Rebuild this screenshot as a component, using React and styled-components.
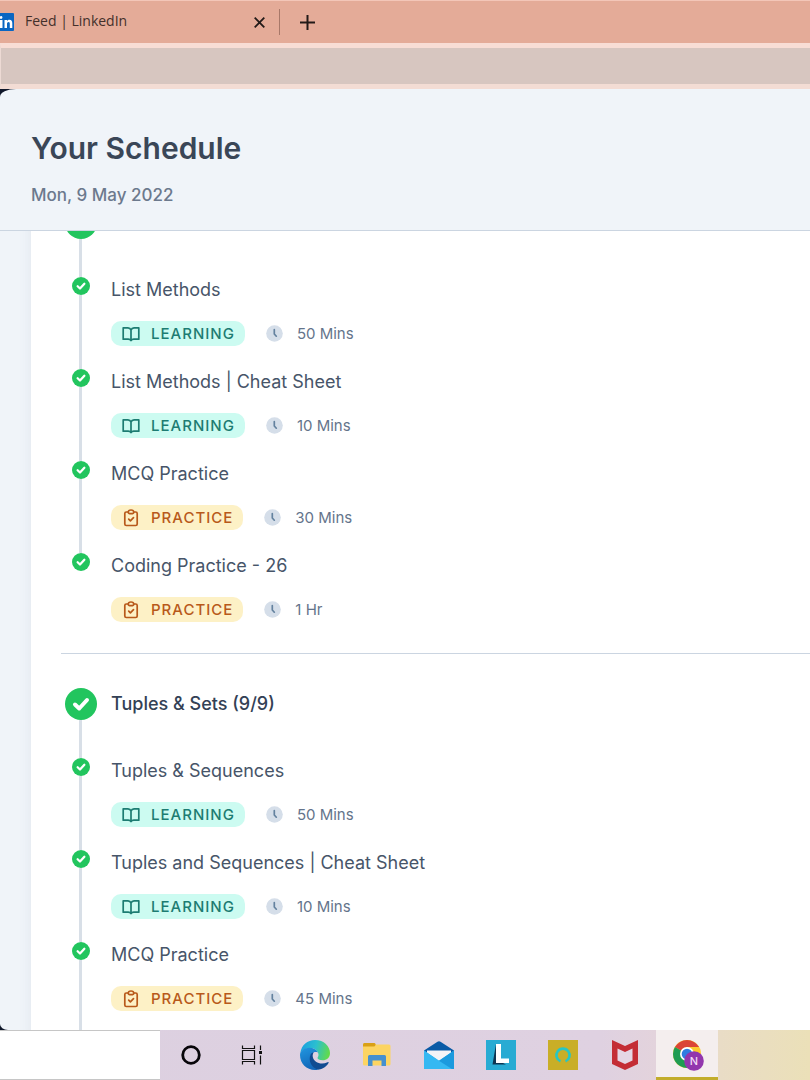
import React from "react";
import styled, { createGlobalStyle, css } from "styled-components";

const GlobalStyle = createGlobalStyle`
  * {
    box-sizing: border-box;
  }
  body {
    margin: 0;
    font-family: "Inter", "Liberation Sans", sans-serif;
  }
  h1,
  h2,
  h3,
  p,
  ul {
    margin: 0;
    padding: 0;
  }
  button {
    border: 0;
    padding: 0;
    background: none;
    font: inherit;
    color: inherit;
    cursor: pointer;
  }
`;

const Page = styled.div`
  display: flex;
  flex-direction: column;
  height: 100vh;
  overflow: hidden;
  background: #0f172a;
`;

const TabStrip = styled.div`
  display: flex;
  align-items: center;
  flex: none;
  height: 43px;
  border-top: 1px solid #f3c6b8;
  background: #e4ab98;
  color: #2b211f;
`;

const Tab = styled.div`
  display: flex;
  align-items: center;
  width: 280px;
  height: 26px;
  padding-right: 12px;
  border-right: 1px solid #a87869;
  .favicon {
    width: 14px;
    height: 18px;
    margin-right: 11px;
  }
  .title {
    flex: 1;
    padding-bottom: 2px;
    font-family: "Open Sans", "Noto Sans", sans-serif;
    font-size: 14px;
    line-height: 20px;
    color: #43302b;
  }
`;

const IconButton = styled.button`
  display: flex;
  align-items: center;
  justify-content: center;
  width: ${(props) => props.$size}px;
  height: ${(props) => props.$size}px;
`;

const NewTab = styled(IconButton)`
  margin-left: 17px;
`;

const Toolbar = styled.div`
  flex: none;
  height: 46px;
  border: solid #f8ddd5;
  border-width: 5px 0;
  border-bottom-color: #f3dcd4;
  background: #d7c6c0;
  border-left: 1px solid #eddad4;
`;

const Content = styled.main`
  display: flex;
  flex-direction: column;
  flex: 1;
  min-height: 0;
  overflow: hidden;
  border-radius: 16px 0 0 8px / 8px 0 0 6px;
  background: #f0f4f9;
`;

const Header = styled.header`
  flex: none;
  padding: 39px 31px 21px;
  border-bottom: 1px solid #cbd5e1;
  h1 {
    font-size: 30px;
    font-weight: 600;
    line-height: 40px;
    color: #3a4657;
  }
  p {
    margin-top: 13px;
    font-size: 17px;
    font-weight: 500;
    line-height: 28px;
    color: #6c798d;
  }
`;

const ScrollArea = styled.div`
  flex: 1;
  min-height: 0;
  overflow: hidden;
  padding-left: 31px;
`;

/* the list is scrolled past the first topic's heading */
const Card = styled.div`
  margin-top: -58px;
  padding-left: 30px;
  background: #fff;
  box-shadow: 0 0 12px rgba(100, 116, 139, 0.1);
`;

const Topic = styled.section`
  padding: 34px 0 8px 4px;
  & + & {
    border-top: 1px solid #cbd5e1;
  }
`;

const Row = styled.div`
  display: flex;
  gap: 14px;
  min-height: ${(props) => (props.$heading ? 70 : 92)}px;
  h2 {
    font-size: 18px;
    font-weight: 500;
    line-height: 32px;
    color: #334155;
  }
  h3 {
    font-size: 18px;
    font-weight: 400;
    line-height: 26px;
    color: #475569;
  }
`;

const Marker = styled.div`
  display: flex;
  flex-direction: column;
  align-items: center;
  flex: none;
  width: 32px;
  .line {
    flex: 1;
    width: 3px;
    margin-right: 1px;
    background: #d8dfe7;
  }
`;

const Dot = styled.svg`
  display: block;
  flex: none;
  width: ${(props) => (props.$big ? 32 : 18)}px;
  height: ${(props) => (props.$big ? 32 : 18)}px;
`;

const Meta = styled.div`
  display: flex;
  align-items: center;
  margin-top: 18px;
  font-size: 15px;
  line-height: 25px;
  color: #64748b;
  .clock {
    margin: 0 14px 0 21px;
  }
`;

const badgeColors = {
  learning: css`
    background: #ccfbf1;
    color: #1d7c72;
  `,
  practice: css`
    background: #fdf1c6;
    color: #b8591a;
  `,
};

const Badge = styled.span`
  display: flex;
  align-items: center;
  height: 25px;
  padding: 0 10px;
  gap: 10px;
  border-radius: 10px;
  font-size: 15px;
  font-weight: 500;
  letter-spacing: 1px;
  text-transform: uppercase;
  ${(props) => badgeColors[props.$kind]}
`;

const Taskbar = styled.footer`
  display: flex;
  flex: none;
  height: 50px;
  background: linear-gradient(90deg, #dcd0e0 0, #dfd1e1 600px, #e3d3dc 656px, #e9dcc6 720px, #ebe0b8 100%);
`;

const SearchBox = styled.input`
  width: 160px;
  border: solid #c6c6c6;
  border-width: 1px 0;
  background: #fff;
  outline: none;
`;

const TaskButton = styled.button`
  display: flex;
  align-items: center;
  justify-content: center;
  width: 62px;
  ${(props) =>
    props.$active &&
    css`
      padding: 3px 0 0 2px;
      border-bottom: 3px solid #c2ad2c;
      background: #f4eeee;
    `}
`;

const topics = [
  {
    id: "lists",
    items: [
      { title: "List Methods", kind: "learning", time: "50 Mins" },
      { title: "List Methods | Cheat Sheet", kind: "learning", time: "10 Mins" },
      { title: "MCQ Practice", kind: "practice", time: "30 Mins" },
      { title: "Coding Practice - 26", kind: "practice", time: "1 Hr" },
    ],
  },
  {
    id: "tuples",
    title: "Tuples & Sets (9/9)",
    more: true,
    items: [
      { title: "Tuples & Sequences", kind: "learning", time: "50 Mins" },
      { title: "Tuples and Sequences | Cheat Sheet", kind: "learning", time: "10 Mins" },
      { title: "MCQ Practice", kind: "practice", time: "45 Mins" },
    ],
  },
];

const Check = ({ big }) => (
  <Dot $big={big} viewBox="0 0 32 32">
    <circle cx="16" cy="16" r="16" fill="#22c55e" />
    <path d="M10 16.500l4.200 4L22 12" fill="none" stroke="#fff" strokeWidth="4" strokeLinecap="round" strokeLinejoin="round" />
  </Dot>
);

const BookIcon = () => (
  <svg width="20" height="16" viewBox="0 0 20 16" fill="none" stroke="currentColor" strokeWidth="1.700" strokeLinejoin="round" strokeLinecap="round">
    <path d="M10 4C9.500 2.600 8.500 1.800 7 1.800H2.200v11.400h5c1.400 0 2.300.4 2.800 1.300.5-.9 1.400-1.300 2.800-1.300h5V1.800H13c-1.500 0-2.500.8-3 2.200zV14.300" />
  </svg>
);

const ClipboardIcon = () => (
  <svg width="20" height="18" viewBox="0 0 20 18" fill="none" stroke="currentColor" strokeWidth="1.700" strokeLinejoin="round" strokeLinecap="round">
    <path d="M7 3H5.300Q3.800 3 3.800 4.500V15Q3.800 16.500 5.300 16.500H14.700Q16.200 16.500 16.200 15V4.500Q16.200 3 14.700 3H13" />
    <path d="M7.200 3.200Q7.300 1 10 1T12.800 3.200Q12.700 4.700 10 4.700T7.200 3.200z" />
    <path d="M7.700 10.200l1.700 1.700 3.100-3.200" />
  </svg>
);

const ClockIcon = () => (
  <svg className="clock" width="17" height="17" viewBox="0 0 17 17">
    <circle cx="8.500" cy="8.500" r="8.300" fill="#d5dee9" />
    <path d="M8.300 4.500V9l2 2.200" fill="none" stroke="#64829f" strokeWidth="1.700" strokeLinecap="round" />
  </svg>
);

const CircleIcon = () => (
  <svg width="20" height="20" viewBox="0 0 20 20">
    <circle cx="10" cy="10" r="8.300" fill="none" stroke="#08060a" strokeWidth="2.800" />
  </svg>
);

const TaskViewIcon = () => (
  <svg width="24" height="20" viewBox="0 0 24 20" fill="none" stroke="#111" strokeWidth="1.200">
    <path d="M1.500 0.500V3.500H13.500V0.500M1.500 5.500h12v9h-12zM1.500 19.500V16.500H13.500V19.500M19.500 0.500V5M19.500 10.500V19.500" />
    <rect x="18" y="6" width="3" height="3" fill="#111" stroke="none" />
  </svg>
);

const EdgeIcon = () => (
  <svg width="30" height="30" viewBox="0 0 30 30">
    <defs>
      <linearGradient id="edgeTop" x1="0" y1="0.300" x2="1" y2="0.500">
        <stop offset="0" stopColor="#1a9fe0" />
        <stop offset="0.500" stopColor="#2bbfd0" />
        <stop offset="1" stopColor="#62db4a" />
      </linearGradient>
      <linearGradient id="edgeSide" x1="0" y1="0" x2="0.400" y2="1">
        <stop offset="0" stopColor="#2197e0" />
        <stop offset="1" stopColor="#1266b8" />
      </linearGradient>
    </defs>
    <path d="M0.300 13C1.500 5 7.500 0 15 0c9 0 15 6.300 15 13 0 4.800-3.500 7.300-7.300 7.300-3.400 0-5.200-1.300-5.200-2.300 0-.7 1-1.300 1-3.200C18.500 11.500 15 8 10.500 8 5.500 8 2 10 .3 13z" fill="url(#edgeTop)" />
    <path d="M0 15C0 11 4 7.700 9.500 7.700c3.500 0 7 1.800 8.500 4.800-4-1.500-7.500 1-7.500 5.500 0 6 5 10.500 10.500 10.200C19.300 29.300 17 30 15 30 6.500 30 0 23.500 0 15z" fill="url(#edgeSide)" />
    <path d="M10.800 14c-3.300 6.500 1.200 15 8 15.500 4.500-.5 8-3.200 9.700-6.500.4-.9-.2-1.200-.9-.8-6.500 3.300-13.600.3-14.800-5.200-.4-2 .2-3.500.9-4.500-1.200 0-2.200.5-2.900 1.500z" fill="#104b91" />
  </svg>
);

const FolderIcon = () => (
  <svg width="30" height="26" viewBox="0 0 30 26">
    <path d="M1 2.500Q1 1 2.500 1h10L14 2.500h13q1.500 0 1.500 1.500V22q0 1.500-1.500 1.500H2.500Q1 23.500 1 22z" fill="#fcd462" />
    <path d="M1 2.500Q1 1 2.500 1h9.800q1.200 0 1.200 1.500T12.300 4.500H1z" fill="#d9a016" />
    <path d="M6 24V14.500Q6 13 7.500 13h15q1.500 0 1.500 1.500V24h-4.500v-5.500h-9V24z" fill="#4590cf" />
  </svg>
);

const MailIcon = () => (
  <svg width="30" height="28" viewBox="0 0 30 28">
    <path d="M0 9.500L13.500 .7q1.500-1 3 0L30 9.500V14H0z" fill="#0a5aa6" />
    <path d="M3 9.500h24V20H3z" fill="#f4f4f7" />
    <path d="M0 9.500l15 10.300L30 9.500V28H0z" fill="#2db1ef" />
    <path d="M0 9.500l15 10.300L28 28H0z" fill="#35b8f2" />
    <path d="M15 19.800L30 9.500V28H28z" fill="#1b9ade" />
  </svg>
);

const LIcon = () => (
  <svg width="30" height="30" viewBox="0 0 30 30">
    <rect width="30" height="30" fill="#28abd3" />
    <path d="M10 4L6.500 24.500H20L11 20z" fill="#0d3652" />
    <path d="M10 4h5v14.500h8V23H10z" fill="#fff" />
  </svg>
);

const AlexaIcon = () => (
  <svg width="30" height="30" viewBox="0 0 30 30">
    <rect width="30" height="30" fill="#c9ae27" />
    <path d="M12.500 21.300A6.600 6.600 0 1 1 17.500 21.300" fill="none" stroke="#27c6c4" strokeWidth="2.600" />
  </svg>
);

const ShieldIcon = () => (
  <svg width="28" height="30" viewBox="0 0 28 30">
    <path d="M1 0l13 6L27 0v24l-13 6-13-6z" fill="#c42d35" />
    <path d="M6.500 8.500l7.500 3.600 7.500-3.600v12L14 24l-7.500-3.500z" fill="#e5d7e5" />
  </svg>
);

const ChromeIcon = () => (
  <svg width="32" height="32" viewBox="0 0 32 32">
    <circle cx="15" cy="15" r="14" fill="#fccb2e" />
    <path d="M15 15L2.900 8A14 14 0 0 1 27.100 8H15z" fill="#db4437" />
    <path d="M15 15L2.900 8A14 14 0 0 0 15 29l5-9z" fill="#1e9c52" />
    <circle cx="15" cy="15" r="7" fill="#fff" />
    <circle cx="15" cy="15" r="5.300" fill="#2f7de1" />
    <circle cx="22" cy="22" r="9.800" fill="#9236ad" />
    <text x="22" y="26" textAnchor="middle" fontSize="11" fontWeight="500" fill="#f2dcf5">
      N
    </text>
  </svg>
);

const apps = [
  { name: "Cortana", icon: CircleIcon },
  { name: "Task View", icon: TaskViewIcon },
  { name: "Edge", icon: EdgeIcon },
  { name: "File Explorer", icon: FolderIcon },
  { name: "Mail", icon: MailIcon },
  { name: "L", icon: LIcon },
  { name: "Alexa", icon: AlexaIcon },
  { name: "McAfee", icon: ShieldIcon },
  { name: "Chrome", icon: ChromeIcon, active: true },
];

const TopicItem = ({ item, last }) => (
  <Row>
    <Marker>
      <Check />
      {!last && <div className="line" />}
    </Marker>
    <div>
      <h3>{item.title}</h3>
      <Meta>
        <Badge $kind={item.kind}>
          {item.kind === "learning" ? <BookIcon /> : <ClipboardIcon />}
          {item.kind}
        </Badge>
        <ClockIcon />
        <span>{item.time}</span>
      </Meta>
    </div>
  </Row>
);

const App = () => {
  return (
    <Page>
      <GlobalStyle />
      <TabStrip>
        <Tab>
          <svg className="favicon" viewBox="0 0 14 18">
            <rect x="-4" width="18" height="18" rx="1" fill="#0a66c2" />
            <path d="M0 7h2.500v8H0zM4.500 7H7v1.200C7.500 7.300 8.400 6.800 9.500 6.800c2 0 2.800 1.300 2.800 3.500V15H9.800v-4.200c0-1.200-.3-1.900-1.200-1.900-1 0-1.600.8-1.600 2V15H4.500z" fill="#fff" />
            <circle cx="1" cy="4.500" r="1.400" fill="#fff" />
          </svg>
          <span className="title">Feed | LinkedIn</span>
          <IconButton $size={16} aria-label="Close tab">
            <svg width="11" height="11" viewBox="0 0 11 11" stroke="#221a18" strokeWidth="1.800">
              <path d="M.7.700l9.600 9.600M10.300.700L.7 10.300" />
            </svg>
          </IconButton>
        </Tab>
        <NewTab $size={20} aria-label="New tab">
          <svg width="15" height="15" viewBox="0 0 15 15" stroke="#221a18" strokeWidth="2">
            <path d="M0 7.500h15M7.500 0v15" />
          </svg>
        </NewTab>
      </TabStrip>
      <Toolbar />
      <Content>
        <Header>
          <h1>Your Schedule</h1>
          <p>Mon, 9 May 2022</p>
        </Header>
        <ScrollArea>
          <Card>
            {topics.map((topic) => (
              <Topic key={topic.id}>
                <Row $heading>
                  <Marker>
                    <Check big />
                    <div className="line" />
                  </Marker>
                  {topic.title && <h2>{topic.title}</h2>}
                </Row>
                {topic.items.map((item, index) => (
                  <TopicItem key={item.title} item={item} last={!topic.more && index === topic.items.length - 1} />
                ))}
              </Topic>
            ))}
          </Card>
        </ScrollArea>
      </Content>
      <Taskbar>
        <SearchBox type="text" aria-label="Search" />
        {apps.map(({ name, icon: Icon, active }) => (
          <TaskButton key={name} $active={active} aria-label={name}>
            <Icon />
          </TaskButton>
        ))}
      </Taskbar>
    </Page>
  );
};

export default App;
